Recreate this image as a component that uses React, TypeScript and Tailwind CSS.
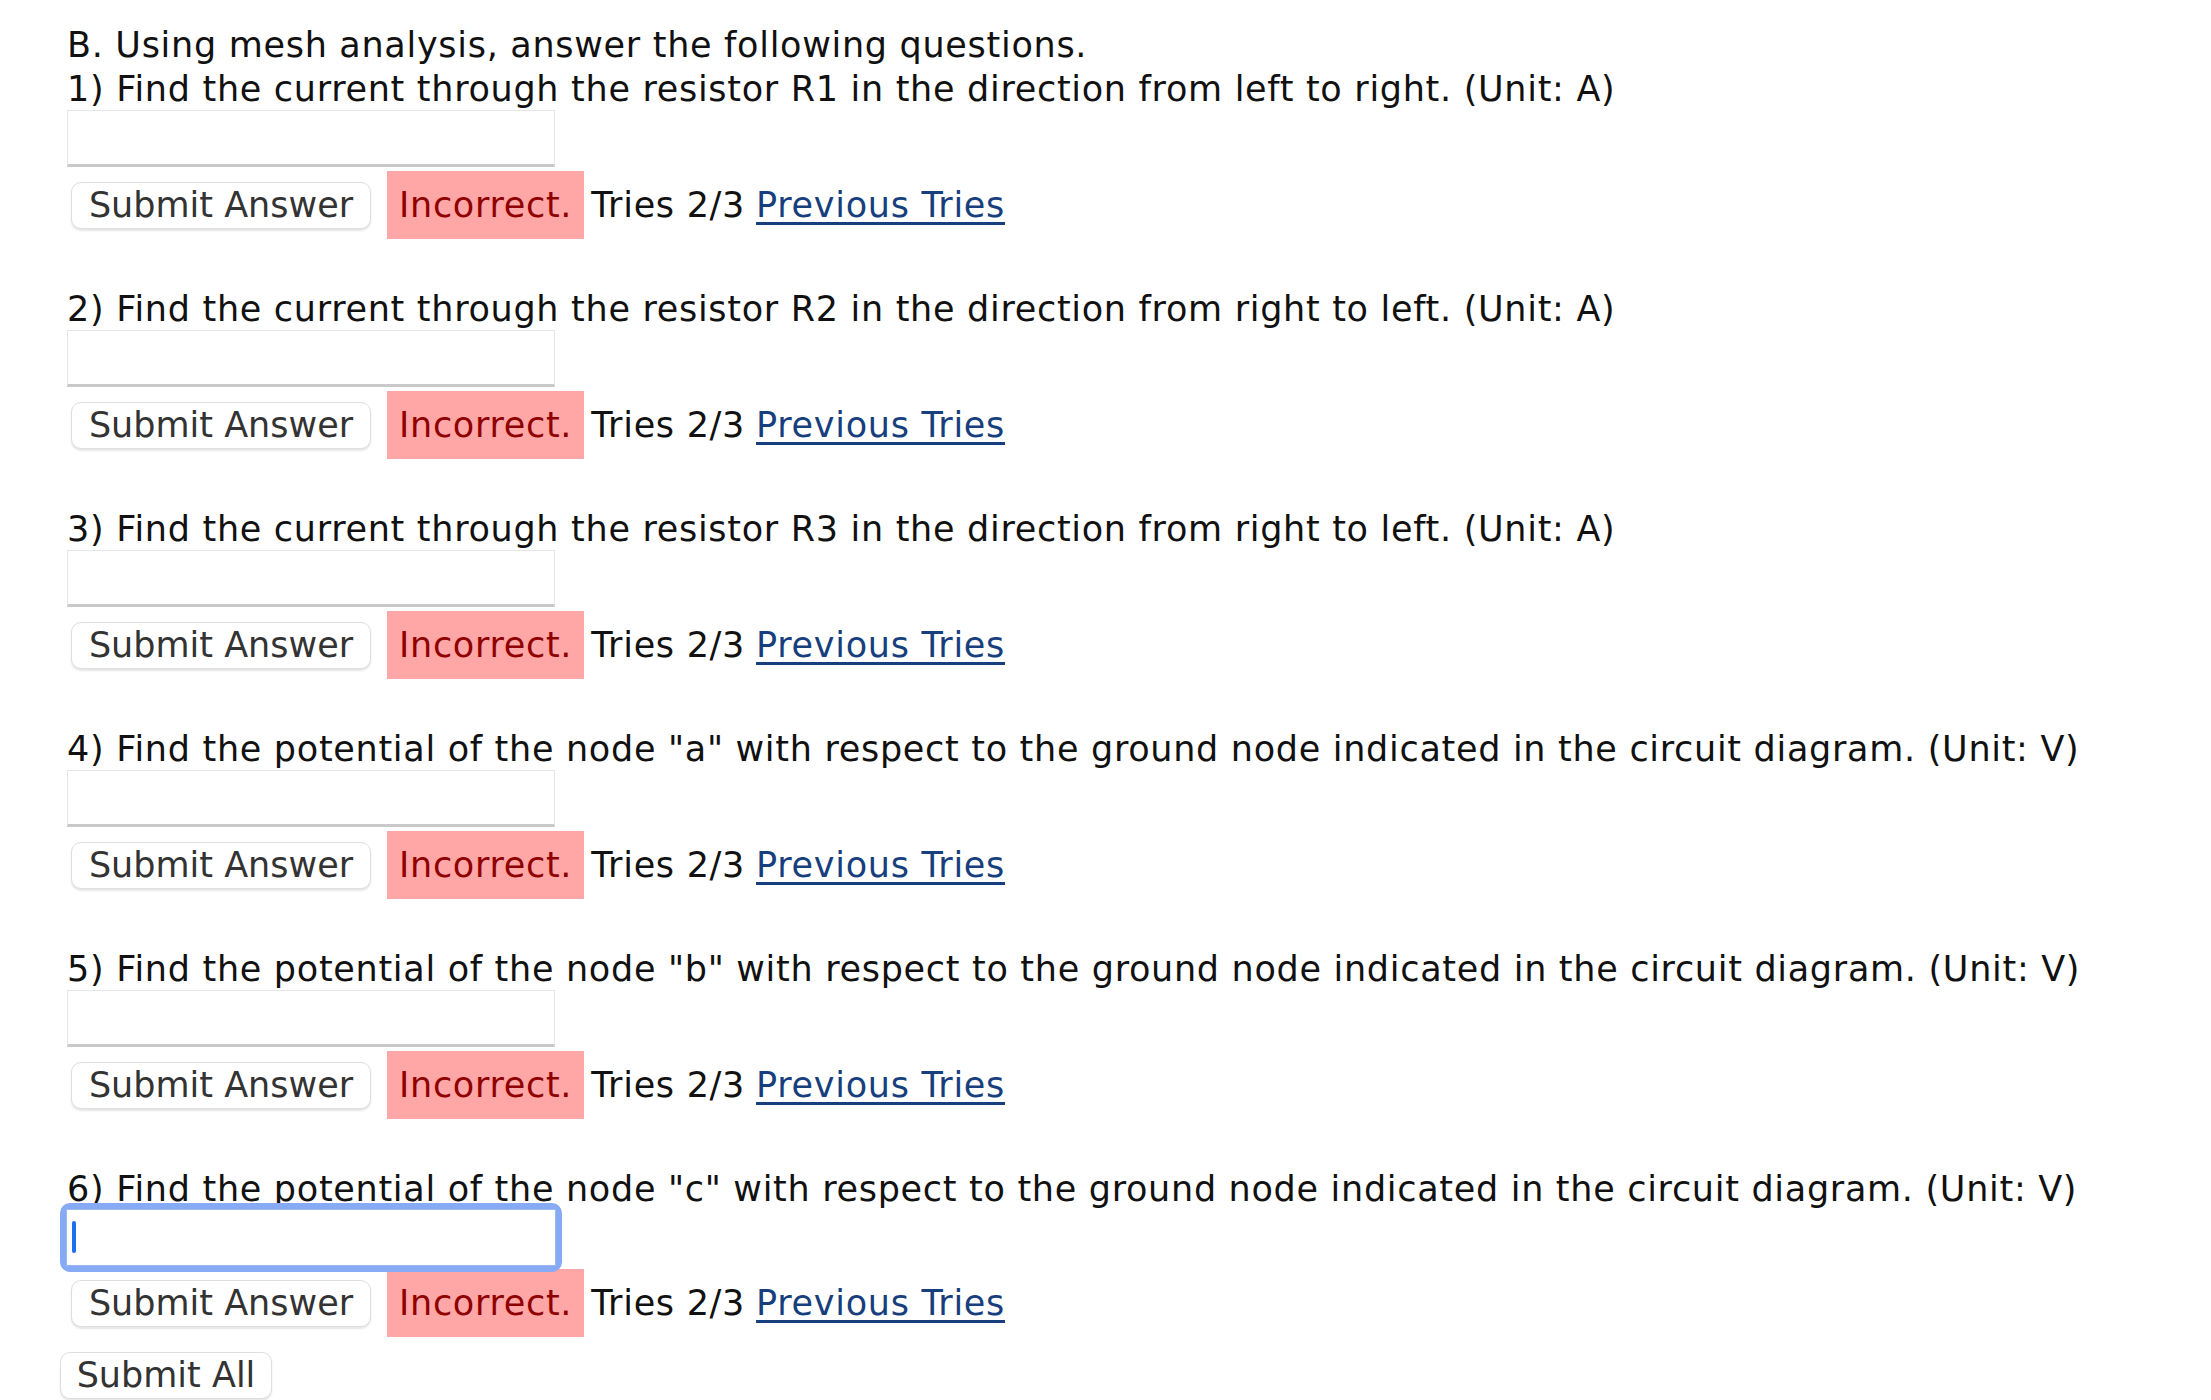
import { Fragment } from 'react';

const questions = [
  '1) Find the current through the resistor R1 in the direction from left to right. (Unit: A)',
  '2) Find the current through the resistor R2 in the direction from right to left. (Unit: A)',
  '3) Find the current through the resistor R3 in the direction from right to left. (Unit: A)',
  '4) Find the potential of the node "a" with respect to the ground node indicated in the circuit diagram. (Unit: V)',
  '5) Find the potential of the node "b" with respect to the ground node indicated in the circuit diagram. (Unit: V)',
  '6) Find the potential of the node "c" with respect to the ground node indicated in the circuit diagram. (Unit: V)',
];

function AnswerInput({ focused }: { focused?: boolean }) {
  if (focused) {
    return (
      <div className="relative z-10 -mx-[7px] -my-[7px] w-[502px] rounded-[10px] border-[6px] border-[#86aaf3]">
        <div className="h-[57px] w-[490px] border border-[#9bb8f0] bg-white" />
        <span className="absolute top-[12px] left-[6px] h-[32px] w-[4px] rounded-full bg-[#1d6ff2]" />
      </div>
    );
  }
  return (
    <input
      type="text"
      className="block h-[57px] w-[488px] border-x border-t border-b-[3px] border-x-[#e6e6e6] border-t-[#e6e6e6] border-b-[#c9c9c9] bg-white outline-none"
    />
  );
}

function StatusRow() {
  return (
    <div className="mt-[4px] flex items-center">
      <button className="ml-[4px] h-[47px] w-[300px] rounded-[10px] border border-[#dedede] bg-white tracking-normal text-[#333] shadow-[0_2px_2px_rgba(0,0,0,0.1)]">
        Submit Answer
      </button>
      <span className="ml-[16px] flex h-[68px] items-center bg-[#ffa6a6] px-[12px] text-[#8f0000]">
        Incorrect.
      </span>
      <span className="ml-[7px] text-[#111]">Tries 2/3</span>
      <a
        href="#"
        className="ml-[11px] text-[#173f7d] underline decoration-[3px] underline-offset-[5px]"
      >
        Previous Tries
      </a>
    </div>
  );
}

export default function App() {
  return (
    <main
      className="min-h-screen bg-white pt-[25px] pl-[67px] text-[35px] leading-[41px] tracking-[0.7px] text-[#111]"
      style={{ fontFamily: '"DejaVu Sans", Verdana, sans-serif' }}
    >
      <div className="mb-[3px]">B. Using mesh analysis, answer the following questions.</div>
      {questions.map((q, i) => (
        <Fragment key={q}>
          <div className={i === questions.length - 1 ? 'mb-0' : 'mb-[50px]'}>
            <div>{q}</div>
            <AnswerInput focused={i === questions.length - 1} />
            <StatusRow />
          </div>
        </Fragment>
      ))}
      <button className="-ml-[7px] mt-[15px] h-[47px] w-[212px] rounded-[10px] border border-[#dedede] bg-white tracking-normal text-[#333] shadow-[0_2px_2px_rgba(0,0,0,0.1)]">
        Submit All
      </button>
    </main>
  );
}
